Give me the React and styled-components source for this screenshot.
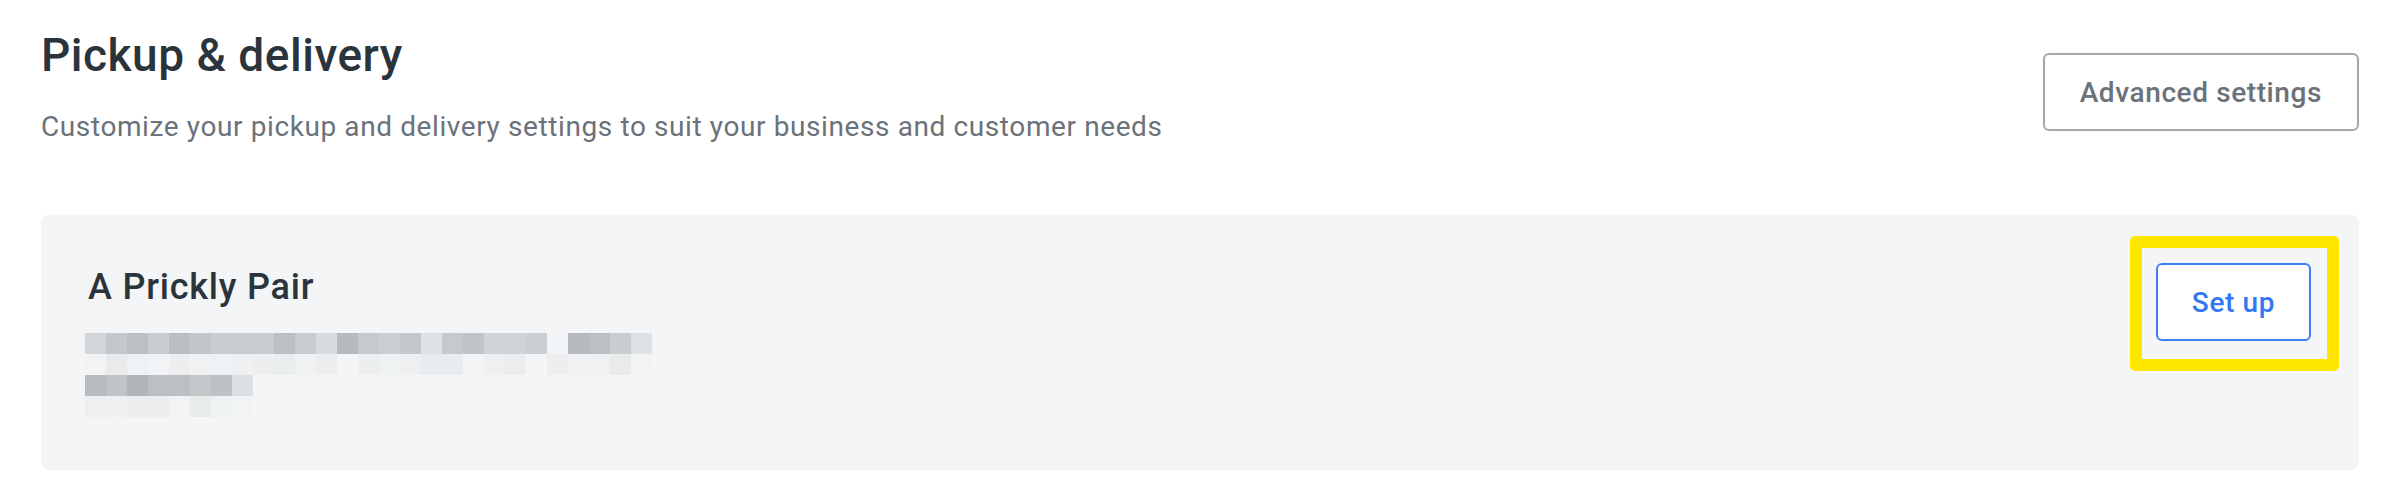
import React from "react";
import styled, { createGlobalStyle } from "styled-components";

const GlobalStyle = createGlobalStyle`
  body {
    margin: 0;
    background: #ffffff;
    font-family: Roboto, "Liberation Sans", sans-serif;
    -webkit-font-smoothing: antialiased;
  }
`;

// blurred address lines, one hex colour per 21px cell
const addressRows = [
  ["d3d6d8","c4c8cb","bcc0c3","c9cdd0","babec2","c2c6c9","c9cdd0","c8ccce","c8ccce","bcc0c4","c8ccce","d8dcdf","b6babe","c6cacd","cbcfd1","c4c8cb","e0e3e5","c6cacd","c0c4c7","d0d4d6","d0d4d6","cbcfd1","f1f3f4","b7bbbf","bcc0c4","c9cdd0","dfe2e4"],
  ["f1f3f4","e8eaeb","eff2f4","f1f3f4","eceef0","eff1f2","eff2f4","eef0f1","eceef0","ebeeef","eff1f2","eceeef","f3f5f6","eceeef","eff2f2","edeff0","e9ecee","e9ecee","f2f4f5","edeff0","eaecee","f3f5f6","eceeef","eff1f2","eff1f2","e8ebea","f1f3f4"],
  ["b8bcc0","c0c4c6","b2b6ba","bcc0c4","bcc0c4","c4c8ca","bec2c5","dde0e2"],
  ["eeeff0","eef0f1","eceeef","eceeef","f1f3f4","e7eceb","eff2f3","f1f3f4"],
];
const CELL = 21;

const Page = styled.div`
  padding: 0 29px 0 41px;
`;

const Header = styled.header`
  display: flex;
  justify-content: space-between;
  align-items: flex-start;
`;

const Intro = styled.div`
  padding-top: 27px;
`;

const Title = styled.h1`
  margin: 0;
  font-size: 46px;
  line-height: 56px;
  font-weight: 500;
  letter-spacing: 0.5px;
  color: #2b333b;
`;

const Subtitle = styled.p`
  margin: 24px 0 0;
  font-size: 28px;
  line-height: 40px;
  font-weight: 400;
  letter-spacing: 0.6px;
  color: #6b7279;
`;

const Button = styled.button`
  box-sizing: border-box;
  height: 78px;
  padding: 0 ${(p) => p.$padX}px;
  border: 2px solid ${(p) => (p.$primary ? "#3d7ef6" : "#a3a8ac")};
  border-radius: 6px;
  background: #ffffff;
  color: ${(p) => (p.$primary ? "#3477f5" : "#6b7279")};
  font-family: inherit;
  font-size: 28px;
  font-weight: 500;
  letter-spacing: 0.6px;
  cursor: pointer;
`;

const HeaderButton = styled(Button)`
  margin-top: 53px;
`;

const Card = styled.section`
  margin-top: 68px;
  display: flex;
  justify-content: space-between;
  align-items: flex-start;
  padding: 48px 48px 53px 44px;
  background: #f3f5f6;
  border-radius: 8px;
`;

const Location = styled.div`
  display: flex;
  flex-direction: column;
  gap: 22px;
`;

const LocationName = styled.h2`
  margin: 0;
  font-size: 36px;
  line-height: 48px;
  font-weight: 500;
  letter-spacing: 0.8px;
  color: #2b333b;
  padding-left: 3px;
`;

const Address = styled.svg`
  display: block;
`;

// callout frame drawn over the set-up action
const Highlight = styled.div`
  position: relative;

  &::after {
    content: "";
    position: absolute;
    top: -27px;
    right: -28px;
    bottom: -30px;
    left: -26px;
    border: 12px solid #ffe700;
    border-radius: 5px;
    pointer-events: none;
  }
`;

function BlurredAddress() {
  const width = Math.max(...addressRows.map((r) => r.length)) * CELL;
  return (
    <Address width={width} height={addressRows.length * CELL}>
      {addressRows.map((row, y) =>
        row.map((c, x) => (
          <rect key={`${x}-${y}`} x={x * CELL} y={y * CELL} width={CELL} height={CELL} fill={`#${c}`} />
        ))
      )}
    </Address>
  );
}

export default function App() {
  return (
    <Page>
      <GlobalStyle />
      <Header>
        <Intro>
          <Title>Pickup &amp; delivery</Title>
          <Subtitle>Customize your pickup and delivery settings to suit your business and customer needs</Subtitle>
        </Intro>
        <HeaderButton $padX={35}>Advanced settings</HeaderButton>
      </Header>
      <Card>
        <Location>
          <LocationName>A Prickly Pair</LocationName>
          <BlurredAddress />
        </Location>
        <Highlight>
          <Button $primary $padX={34}>Set up</Button>
        </Highlight>
      </Card>
    </Page>
  );
}
